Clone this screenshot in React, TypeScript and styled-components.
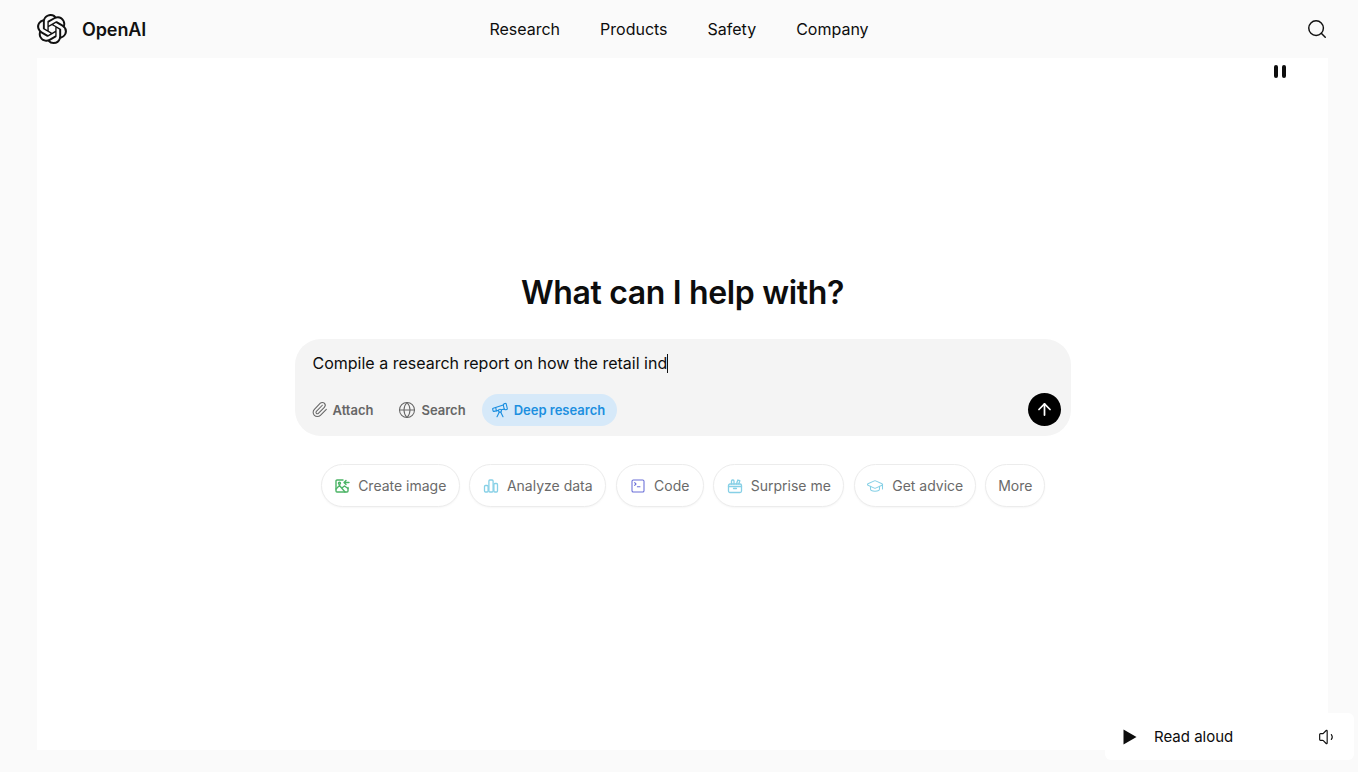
import React from "react";
import styled, { createGlobalStyle } from "styled-components";
import { Search as SearchIcon, Paperclip, Globe, Telescope, ArrowUp, Volume1, GraduationCap, SquareTerminal } from "lucide-react";
import { SiOpenai } from "react-icons/si";

const Global = createGlobalStyle`
  html, body { margin: 0; height: 100%; background: #fafafa; }
  body { font-family: Inter, "Liberation Sans", sans-serif; color: #0d0d0d; overflow: hidden; }
  #root { height: 100%; }
`;

const Page = styled.div`
  position: relative;
  width: 1358px;
  height: 772px;
  display: flex;
  flex-direction: column;
  background: #fafafa;
`;

const Header = styled.header`
  height: 58px;
  padding: 0 30px 0 37px;
  display: grid;
  grid-template-columns: 1fr auto 1fr;
  align-items: center;
  flex: none;
`;

const Brand = styled.div`
  display: flex;
  align-items: center;
  gap: 15px;
  font-size: 18px;
  font-weight: 600;
  letter-spacing: -0.1px;
  color: #111;
`;

const Menu = styled.nav`
  display: flex;
  gap: 40px;
  font-size: 16px;
  color: #0d0d0d;
  margin-left: -7px;
`;

const HeaderEnd = styled.div`
  display: flex;
  justify-content: flex-end;
`;

const Stage = styled.main`
  position: relative;
  width: 1291px;
  height: 692px;
  margin-left: 37px;
  padding-top: 215px;
  box-sizing: border-box;
  background: #fff;
  display: flex;
  flex-direction: column;
  align-items: center;
`;

const PauseButton = styled.div`
  position: absolute;
  top: 7px;
  right: 42px;
  display: flex;
  gap: 4px;
`;

const PauseBar = styled.span`
  width: 4px;
  height: 13px;
  border-radius: 2px;
  background: #0d0d0d;
`;

const Heading = styled.h1`
  margin: 0;
  font-size: 32px;
  line-height: 40px;
  font-weight: 600;
  letter-spacing: -0.35px;
  color: #0d0d0d;
`;

const Composer = styled.div`
  width: 776px;
  height: 97px;
  margin-top: 26px;
  box-sizing: border-box;
  padding: 14px 10px 10px 18px;
  background: #f4f4f4;
  border-radius: 26px;
  display: flex;
  flex-direction: column;
  justify-content: space-between;
`;

const Prompt = styled.div`
  display: flex;
  align-items: center;
  height: 21px;
  font-size: 16px;
  line-height: 21px;
  color: #0d0d0d;
`;

const Caret = styled.span`
  width: 1px;
  height: 19px;
  background: #111;
`;

const ComposerRow = styled.div`
  display: flex;
  align-items: center;
  justify-content: space-between;
  margin-left: -2px;
`;

const Tools = styled.div`
  display: flex;
  align-items: center;
`;

const Tool = styled.div<{ $active?: boolean; $gap: number; $pad: string; $mr: number }>`
  display: flex;
  align-items: center;
  height: 32px;
  gap: ${(p) => p.$gap}px;
  padding: ${(p) => p.$pad};
  margin-right: ${(p) => p.$mr}px;
  border-radius: 16px;
  font-size: 13px;
  font-weight: 600;
  color: ${(p) => (p.$active ? "#1c8fe0" : "#666")};
  background: ${(p) => (p.$active ? "#d6e9f9" : "transparent")};
`;

const SendButton = styled.div`
  width: 33px;
  height: 33px;
  border-radius: 50%;
  background: #000;
  color: #fff;
  display: flex;
  align-items: center;
  justify-content: center;
`;

const Chips = styled.div`
  display: flex;
  margin-top: 28px;
  margin-left: 1px;
  gap: 9.5px;
`;

const Chip = styled.div<{ $w: number }>`
  width: ${(p) => p.$w}px;
  height: 43px;
  box-sizing: border-box;
  display: flex;
  align-items: center;
  justify-content: center;
  gap: 8px;
  border: 1px solid #ececec;
  border-radius: 22px;
  background: #fff;
  box-shadow: 0 1px 2px rgba(0, 0, 0, 0.04);
  font-size: 14px;
  color: #6a6a6a;
`;

const ReadAloud = styled.div`
  position: absolute;
  left: 1105px;
  top: 713px;
  width: 249px;
  height: 47px;
  box-sizing: border-box;
  padding: 0 16px 0 18px;
  border-radius: 6px;
  background: #fff;
  display: flex;
  align-items: center;
  font-size: 15px;
  color: #0d0d0d;
`;

const ReadLabel = styled.span`
  flex: 1;
  margin-left: 17px;
`;

const ImageGlyph = () => (
  <svg width="16" height="16" viewBox="0 0 16 16" fill="none" stroke="#4cb466" strokeWidth="1.4" strokeLinecap="round" strokeLinejoin="round">
    <path d="M9 2H3a1 1 0 0 0-1 1v10a1 1 0 0 0 1 1h10a1 1 0 0 0 1-1V9.5" />
    <path d="M2 11l3.5-3.5 5.5 6.5" />
    <path d="M8.5 9.5L10.5 8l3.5 2.5" />
    <circle cx="5.5" cy="5.2" r="1" />
    <path d="M12 2.5l-2 2 2 2M15 4.5h-4" />
  </svg>
);

const ChartGlyph = () => (
  <svg width="16" height="16" viewBox="0 0 16 16" fill="none" stroke="#86d0e6" strokeWidth="1.3" strokeLinejoin="round">
    <rect x="1.5" y="7.5" width="3.6" height="6.5" rx="1" />
    <rect x="5.9" y="2" width="4.2" height="12" rx="1" />
    <rect x="10.9" y="5.5" width="3.6" height="8.5" rx="1" />
  </svg>
);

const GiftGlyph = () => (
  <svg width="16" height="16" viewBox="0 0 16 16" fill="none" stroke="#86d0e6" strokeWidth="1.3" strokeLinecap="round" strokeLinejoin="round">
    <rect x="1.5" y="6" width="13" height="8.5" rx="1.5" />
    <path d="M1.5 8.5h13M6.5 10.5h3" />
    <path d="M4.5 6V3a1 1 0 0 1 1-1h.5a1 1 0 0 1 1 1v3" />
    <path d="M9.5 6l1.3-4 2 .7L11.8 6" />
  </svg>
);

const chips = [
  { label: "Create image", w: 139, icon: <ImageGlyph /> },
  { label: "Analyze data", w: 137, icon: <ChartGlyph /> },
  { label: "Code", w: 88, icon: <SquareTerminal size={16} strokeWidth={1.6} color="#6a6fd8" /> },
  { label: "Surprise me", w: 131, icon: <GiftGlyph /> },
  { label: "Get advice", w: 122, icon: <GraduationCap size={18} strokeWidth={1.4} color="#86d0e6" /> },
  { label: "More", w: 60 },
];

export default function App() {
  return (
    <Page>
      <Global />
      <Header>
        <Brand>
          <SiOpenai size={30} color="#111" />
          OpenAI
        </Brand>
        <Menu>
          <span>Research</span>
          <span>Products</span>
          <span>Safety</span>
          <span>Company</span>
        </Menu>
        <HeaderEnd>
          <SearchIcon size={22} strokeWidth={1.6} color="#111" />
        </HeaderEnd>
      </Header>
      <Stage>
        <PauseButton>
          <PauseBar />
          <PauseBar />
        </PauseButton>
        <Heading>What can I help with?</Heading>
        <Composer>
          <Prompt>
            Compile a research report on how the retail ind
            <Caret />
          </Prompt>
          <ComposerRow>
            <Tools>
              <Tool $gap={5} $pad="0" $mr={25}>
                <Paperclip size={17} strokeWidth={1.5} />
                Attach
              </Tool>
              <Tool $gap={5} $pad="0" $mr={16}>
                <Globe size={18} strokeWidth={1.4} />
                Search
              </Tool>
              <Tool $active $gap={5} $pad="0 12px 0 9px" $mr={0}>
                <Telescope size={18} strokeWidth={1.5} />
                Deep research
              </Tool>
            </Tools>
            <SendButton>
              <ArrowUp size={19} strokeWidth={2.2} />
            </SendButton>
          </ComposerRow>
        </Composer>
        <Chips>
          {chips.map((c) => (
            <Chip key={c.label} $w={c.w}>
              {c.icon}
              {c.label}
            </Chip>
          ))}
        </Chips>
      </Stage>
      <ReadAloud>
        <svg width="14" height="16" viewBox="0 0 14 16" fill="#0d0d0d">
          <path d="M0.5 0.5L13.5 8L0.5 15.5Z" />
        </svg>
        <ReadLabel>Read aloud</ReadLabel>
        <Volume1 size={20} strokeWidth={1.4} color="#111" />
      </ReadAloud>
    </Page>
  );
}
